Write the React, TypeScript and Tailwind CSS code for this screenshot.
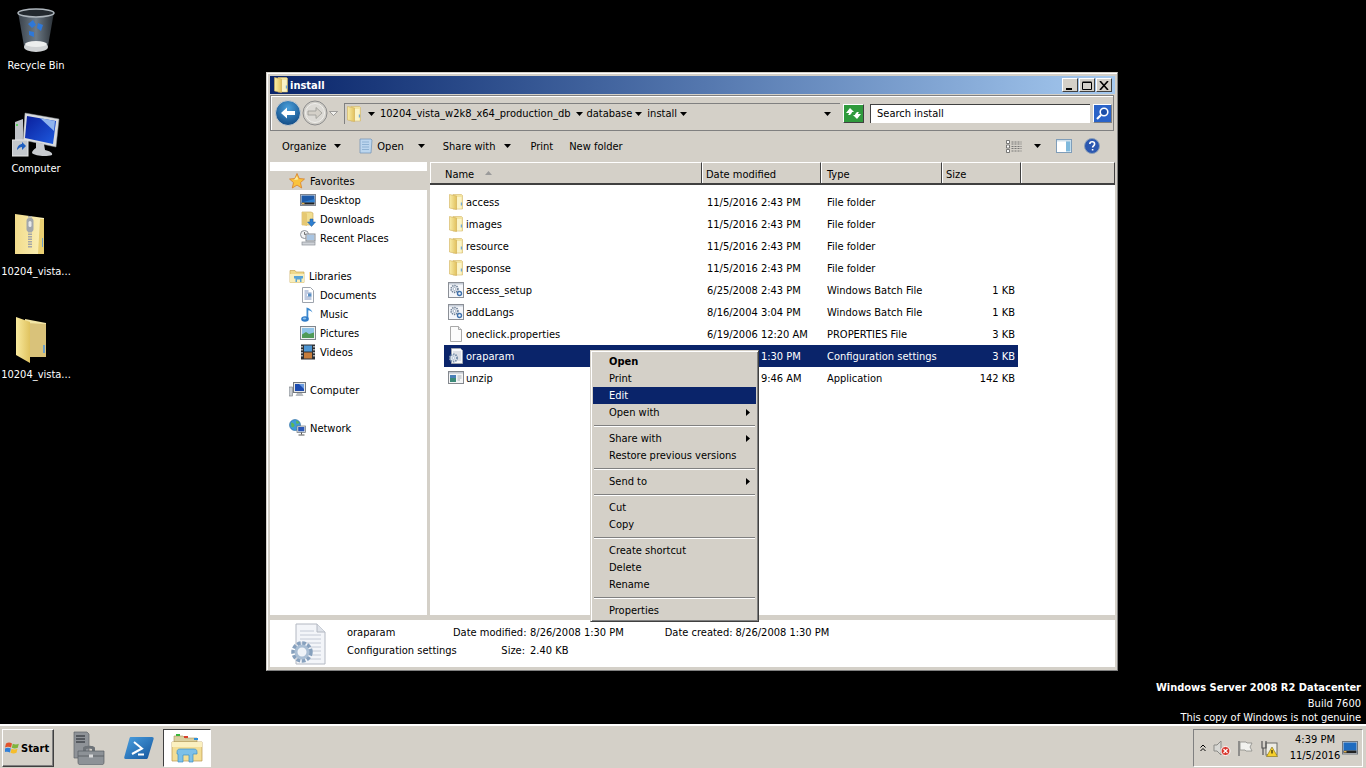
import React from 'react';

const font = "font-['DejaVu_Sans_Condensed','DejaVu_Sans',sans-serif] [font-stretch:condensed]";

const Caret = ({ className = '' }: { className?: string }) => (
  <svg width="7" height="4" viewBox="0 0 7 4" className={className}>
    <path d="M0 0h7L3.5 4z" fill="#000" />
  </svg>
);

const FolderSmall = () => (
  <svg width="16" height="16" viewBox="0 0 16 16" className="shrink-0">
    <defs>
      <linearGradient id="fs" x1="0" y1="0" x2="1" y2="0">
        <stop offset="0" stopColor="#f9eda8" />
        <stop offset="1" stopColor="#e2c25f" />
      </linearGradient>
    </defs>
    <path d="M5 .5h8.500l1 1V15H5z" fill="#f3e4a0" stroke="#d4b766" strokeWidth=".6" />
    <path d="M1.500.5 8.500 2v13.500l-7-1.500z" fill="url(#fs)" stroke="#d2b05a" strokeWidth=".6" />
    <path d="M9 3h4.500v11.500H9z" fill="#fbf4c8" />
    <rect x="12.800" y="8.500" width="1.300" height="3" fill="#6fa8d8" />
  </svg>
);

const BatchIcon = () => (
  <svg width="16" height="16" viewBox="0 0 16 16" className="shrink-0">
    <rect x=".5" y=".5" width="15" height="15" fill="#f4f6fa" stroke="#8b8f96" />
    <rect x="1" y="1" width="14" height="1.500" fill="#c4cbd6" />
    <circle cx="6.500" cy="7" r="3.400" fill="none" stroke="#6d7f96" strokeWidth="1.600" strokeDasharray="1.400 .8" />
    <circle cx="6.500" cy="7" r="1.500" fill="#fff" stroke="#7f93ad" strokeWidth=".7" />
    <circle cx="11.500" cy="11.500" r="2" fill="none" stroke="#3f72ad" strokeWidth="1.400" />
  </svg>
);

const BlankDoc = () => (
  <svg width="16" height="16" viewBox="0 0 16 16" className="shrink-0">
    <path d="M2.500.5h8l3 3v12h-11z" fill="#fbfbfb" stroke="#a8a8a8" />
    <path d="M10.500.5v3h3" fill="#e8e8e8" stroke="#a8a8a8" />
  </svg>
);

const ConfigIcon = () => (
  <svg width="16" height="16" viewBox="0 0 16 16" className="shrink-0">
    <path d="M3.500.5h9l2 2v13h-11z" fill="#f8f9fb" stroke="#a0a6b0" />
    <path d="M5 4h8M5 6h8M8 8h5M9 10h4M9 12h4" stroke="#b5bcc8" strokeWidth=".8" />
    <circle cx="5.500" cy="10" r="3.600" fill="#eef2f7" stroke="#7d93ad" strokeWidth="2" strokeDasharray="1.500 .8" />
    <circle cx="5.500" cy="10" r="1.500" fill="#eef2f7" stroke="#8ea4bd" strokeWidth=".6" />
  </svg>
);

const AppIcon = () => (
  <svg width="16" height="16" viewBox="0 0 16 16" className="shrink-0">
    <rect x=".5" y="1.500" width="15" height="12" fill="#f4f5f6" stroke="#84888e" />
    <rect x="1" y="2" width="14" height="1.600" fill="#c3c8d0" />
    <rect x="2" y="5" width="6" height="7" fill="#3c8a78" />
    <rect x="2" y="5" width="6" height="3" fill="#4a7fb8" />
    <path d="M9.500 6h4M9.500 8h4M9.500 10h2.500" stroke="#9aa0a8" strokeWidth=".8" />
  </svg>
);

const Star = () => (
  <svg width="16" height="16" viewBox="0 0 16 16" className="shrink-0">
    <path d="M8 .5l2.200 5 5.300.5-4 3.600 1.200 5.400L8 12.100 3.300 15l1.200-5.400-4-3.600 5.300-.5z" fill="#f9c33c" stroke="#d9802a" strokeWidth=".8" />
    <path d="M8 3l1.300 3.500L5 7z" fill="#fdeaa0" />
  </svg>
);

const DesktopIcon = () => (
  <svg width="16" height="16" viewBox="0 0 16 16" className="shrink-0">
    <rect x=".5" y="2.500" width="15" height="11" fill="#d9dde2" stroke="#7e8590" />
    <rect x="1.500" y="3.500" width="13" height="7" fill="#1e5aa8" />
    <path d="M1.500 10.500 14.500 7v3.500z" fill="#2d7fd0" />
    <rect x="1.500" y="10.500" width="13" height="2" fill="#222" />
    <rect x="2" y="10.800" width="2.500" height="1.400" fill="#e0b050" />
  </svg>
);

const DownloadsIcon = () => (
  <svg width="16" height="16" viewBox="0 0 16 16" className="shrink-0">
    <path d="M2 1h9l2 1v12H2z" fill="#f0dd90" stroke="#c9a650" strokeWidth=".6" />
    <path d="M2 1l5 1.500V15l-5-1.500z" fill="#e6c873" />
    <path d="M10 8h3v3h2.500l-4 4.500-4-4.500H10z" fill="#2f7fd0" stroke="#1b5aa0" strokeWidth=".5" />
  </svg>
);

const RecentIcon = () => (
  <svg width="16" height="16" viewBox="0 0 16 16" className="shrink-0">
    <circle cx="4.500" cy="4.500" r="4" fill="#f1f2f4" stroke="#8d929a" />
    <path d="M4.500 2v2.500H7" fill="none" stroke="#555" strokeWidth=".8" />
    <rect x="6" y="4" width="9" height="7" fill="#dfe3e8" stroke="#858b93" />
    <rect x="7" y="5" width="7" height="5" fill="#a9c5e2" />
    <rect x="2" y="12" width="13" height="3" fill="#cfd3d8" stroke="#8b9097" strokeWidth=".7" />
  </svg>
);

const LibrariesIcon = () => (
  <svg width="16" height="16" viewBox="0 0 16 16" className="shrink-0">
    <path d="M1 2.500h5l1 1.500h8v10.500H1z" fill="#efd98c" stroke="#c9a650" strokeWidth=".7" />
    <path d="M1 6h14v8.500H1z" fill="#f8eebc" />
    <path d="M5 8h9v2.500H12.500V14H11v-2.500H8V14H6.500v-3.500H5z" fill="#58a3d6" />
  </svg>
);

const DocumentsIcon = () => (
  <svg width="16" height="16" viewBox="0 0 16 16" className="shrink-0">
    <path d="M2.500.5h8l3 3v12h-11z" fill="#fff" stroke="#9ea4ad" />
    <path d="M4.500 4h4M4.500 6h7M4.500 8h2.500M4.500 10h7M4.500 12h7" stroke="#6f89b8" strokeWidth=".9" />
    <rect x="8" y="6.500" width="3.500" height="3" fill="#5a8fc4" />
  </svg>
);

const MusicIcon = () => (
  <svg width="16" height="16" viewBox="0 0 16 16" className="shrink-0">
    <path d="M6.500 12V1.500c2 .5 5 2 6 5-1.500-1.500-3-2-4.200-2.200V13z" fill="#3c8ad0" />
    <ellipse cx="5" cy="13" rx="3.800" ry="2.700" fill="#2f7bc8" />
    <ellipse cx="4.500" cy="12.400" rx="1.800" ry="1" fill="#8cc3ef" />
  </svg>
);

const PicturesIcon = () => (
  <svg width="16" height="16" viewBox="0 0 16 16" className="shrink-0">
    <rect x=".5" y="1.500" width="15" height="13" fill="#eef0f2" stroke="#80868e" />
    <rect x="2" y="3" width="12" height="10" fill="#8fc3e8" />
    <path d="M2 9.500 6 7l3 2 5-1.500V13H2z" fill="#4f9a58" />
  </svg>
);

const VideosIcon = () => (
  <svg width="16" height="16" viewBox="0 0 16 16" className="shrink-0">
    <rect x="1" y=".5" width="14" height="15" fill="#2d3136" />
    <path d="M2 2v1.500M2 5v1.500M2 8v1.500M2 11v1.500M14 2v1.500M14 5v1.500M14 8v1.500M14 11v1.500" stroke="#fff" strokeWidth="1.200" />
    <rect x="4" y="1.500" width="8" height="6" fill="#4f97d4" />
    <rect x="4" y="8.500" width="8" height="6" fill="#c77d3c" />
  </svg>
);

const ComputerSmall = () => (
  <svg width="17" height="16" viewBox="0 0 17 16" className="shrink-0">
    <rect x="0" y="5" width="3.500" height="9" fill="#c8ccd0" stroke="#70767c" strokeWidth=".6" />
    <rect x="4.500" y=".5" width="12" height="10" fill="#e4e6e8" stroke="#73787e" />
    <rect x="6" y="2" width="9" height="7" fill="#1c4bb0" />
    <path d="M10 2h5v5z" fill="#6a9be0" />
    <path d="M8 11h5l1.500 3h-8z" fill="#b8bcc0" />
  </svg>
);

const NetworkIcon = () => (
  <svg width="17" height="17" viewBox="0 0 17 17" className="shrink-0">
    <circle cx="6" cy="6" r="5.500" fill="#3f9bd8" stroke="#23679f" strokeWidth=".6" />
    <path d="M2 3.500c2 0 3 1 3.500 2.500S4 8.500 2.500 8M7 1.500c1.500 1 3 1 3.500 2.500L7.500 5z" fill="#5db854" />
    <rect x="8" y="7" width="8.500" height="6.500" fill="#dfe3e6" stroke="#6c7278" strokeWidth=".7" />
    <rect x="9.200" y="8" width="6.100" height="4.300" fill="#2a57b8" />
    <path d="M12.500 13.500v2M9.500 16h6" stroke="#555" />
  </svg>
);

const navSections = [
  {
    head: 'Favorites',
    icon: <Star />,
    active: true,
    items: [
      { label: 'Desktop', icon: <DesktopIcon /> },
      { label: 'Downloads', icon: <DownloadsIcon /> },
      { label: 'Recent Places', icon: <RecentIcon /> },
    ],
  },
  {
    head: 'Libraries',
    icon: <LibrariesIcon />,
    items: [
      { label: 'Documents', icon: <DocumentsIcon /> },
      { label: 'Music', icon: <MusicIcon /> },
      { label: 'Pictures', icon: <PicturesIcon /> },
      { label: 'Videos', icon: <VideosIcon /> },
    ],
  },
  { head: 'Computer', icon: <ComputerSmall />, items: [] },
  { head: 'Network', icon: <NetworkIcon />, items: [] },
];

const files = [
  { name: 'access', date: '11/5/2016 2:43 PM', type: 'File folder', size: '', icon: <FolderSmall /> },
  { name: 'images', date: '11/5/2016 2:43 PM', type: 'File folder', size: '', icon: <FolderSmall /> },
  { name: 'resource', date: '11/5/2016 2:43 PM', type: 'File folder', size: '', icon: <FolderSmall /> },
  { name: 'response', date: '11/5/2016 2:43 PM', type: 'File folder', size: '', icon: <FolderSmall /> },
  { name: 'access_setup', date: '6/25/2008 2:43 PM', type: 'Windows Batch File', size: '1 KB', icon: <BatchIcon /> },
  { name: 'addLangs', date: '8/16/2004 3:04 PM', type: 'Windows Batch File', size: '1 KB', icon: <BatchIcon /> },
  { name: 'oneclick.properties', date: '6/19/2006 12:20 AM', type: 'PROPERTIES File', size: '3 KB', icon: <BlankDoc /> },
  { name: 'oraparam', date: '8/26/2008 1:30 PM', type: 'Configuration settings', size: '3 KB', icon: <ConfigIcon />, selected: true },
  { name: 'unzip', date: '8/26/2008 9:46 AM', type: 'Application', size: '142 KB', icon: <AppIcon /> },
];

const menuGroups = [
  [{ label: 'Open', bold: true }, { label: 'Print' }, { label: 'Edit', active: true }, { label: 'Open with', arrow: true }],
  [{ label: 'Share with', arrow: true }, { label: 'Restore previous versions' }],
  [{ label: 'Send to', arrow: true }],
  [{ label: 'Cut' }, { label: 'Copy' }],
  [{ label: 'Create shortcut' }, { label: 'Delete' }, { label: 'Rename' }],
  [{ label: 'Properties' }],
];

const columns = [
  { label: 'Name', w: 'w-[272px]', pl: 'pl-[14px]', sort: true },
  { label: 'Date modified', w: 'w-[119px]', pl: 'pl-[3px]' },
  { label: 'Type', w: 'w-[121px]', pl: 'pl-[5px]' },
  { label: 'Size', w: 'w-[79px]', pl: 'pl-[3px]' },
  { label: '', w: 'flex-1', pl: '' },
];

const RecycleBin = () => (
  <svg width="40" height="46" viewBox="0 0 40 46">
    <defs>
      <linearGradient id="bin" x1="0" y1="0" x2="1" y2="0">
        <stop offset="0" stopColor="#39414a" />
        <stop offset=".5" stopColor="#6d7a86" />
        <stop offset="1" stopColor="#2a3036" />
      </linearGradient>
    </defs>
    <path d="M2 5l6 34c2 5 22 5 24 0l6-34z" fill="url(#bin)" />
    <ellipse cx="20" cy="40" rx="12" ry="5" fill="#cfd2d4" />
    <ellipse cx="20" cy="37" rx="11" ry="3" fill="#eceeee" />
    <ellipse cx="20" cy="6" rx="18" ry="4" fill="#23292f" stroke="#aeb6bd" strokeWidth="1.500" />
    <path d="M12 17l5-4 3 5-4 3zM22 16l5 2-2 6-4-3zM13 24l5 1 0 5-5-2z" fill="#2f78d8" />
  </svg>
);

const ComputerBig = () => (
  <svg width="48" height="48" viewBox="0 0 48 48">
    <defs>
      <linearGradient id="scr" x1="0" y1="0" x2="1" y2="1">
        <stop offset="0" stopColor="#0a1f9c" />
        <stop offset="1" stopColor="#1e5be0" />
      </linearGradient>
    </defs>
    <path d="M3 10l8-3v30H3z" fill="#bfc3c8" />
    <rect x="4" y="12" width="2" height="2" fill="#5fd060" />
    <path d="M13 1l34 6-3 28-33-7z" fill="#d9dcdf" stroke="#8c9095" strokeWidth=".5" />
    <path d="M15 4l29 5-3 23-28-6z" fill="url(#scr)" />
    <path d="M28 6l15 3-1 10z" fill="#8fb4ee" />
    <path d="M24 30l8 2 1 6c5 1 8 3 7 5-6 2-17 1-20-2 0-2 2-4 4-5z" fill="#c8cbcf" />
    <rect x="0" y="28" width="16" height="16" fill="#c3c7cc" stroke="#e8e8e8" />
    <path d="M5 38c0-4 3-6 5-6v-2l4 4-4 4v-3c-2 0-3 1-5 3z" fill="#1f5fc0" />
  </svg>
);

const ZipFolder = () => (
  <svg width="32" height="42" viewBox="0 0 32 42">
    <defs>
      <linearGradient id="zf" x1="0" y1="0" x2="1" y2="0">
        <stop offset="0" stopColor="#f2dc8c" />
        <stop offset="1" stopColor="#fbf0b8" />
      </linearGradient>
    </defs>
    <path d="M1 1l29 4v36H1z" fill="url(#zf)" />
    <path d="M26 6h4v35h-6z" fill="#e9cf72" />
    <path d="M28 25v9h1v-9z" fill="#6fa0c8" />
    <path d="M16 3v32" stroke="#a4a6a8" strokeWidth="4" strokeDasharray="1.500 1" />
    <rect x="12.500" y="5" width="7" height="14" rx="3" fill="#a2a7ac" />
    <rect x="14.500" y="8" width="3" height="6" rx="1.500" fill="#e7e9ea" />
  </svg>
);

const FolderBig = () => (
  <svg width="32" height="46" viewBox="0 0 32 46">
    <defs>
      <linearGradient id="fb" x1="0" y1="0" x2="1" y2="0">
        <stop offset="0" stopColor="#f9ea9f" />
        <stop offset="1" stopColor="#e0c360" />
      </linearGradient>
    </defs>
    <path d="M10 2l21 4v34H10z" fill="#f3e6a6" />
    <path d="M10 6l21 1v33H12z" fill="#d9c27a" />
    <path d="M1 0l14 5v41L1 38z" fill="url(#fb)" />
    <path d="M28 28v8h2v-8z" fill="#6fa0c8" />
  </svg>
);

const desktopItems = [
  { label: 'Recycle Bin', icon: <RecycleBin />, h: 'h-[73px]', mb: 'mb-[4px]' },
  { label: 'Computer', icon: <ComputerBig />, h: 'h-[103px]', mb: 'mb-[0px]' },
  { label: '10204_vista...', icon: <ZipFolder />, h: 'h-[103px]', mb: 'mb-[8px] mr-[13px]' },
  { label: '10204_vista...', icon: <FolderBig />, h: 'h-[103px]', mb: 'mb-[3px] mr-[10px]' },
];

const StartFlag = () => (
  <svg width="15" height="14" viewBox="0 0 15 14" className="shrink-0">
    <path d="M1 2.500c2-1.200 4-1.200 6 0L6 6.500C4 5.500 2 5.500 0 6.500z" fill="#e0532c" />
    <path d="M7.800 2.800c2 1 4 1 6 0l-1 4c-2 1-4 1-6 0z" fill="#7fb53c" />
    <path d="M0 7.500c2-1 4-1 5.800 0L5 11.500c-2-1-4-1-6 0z" fill="#2f7fd8" />
    <path d="M6.500 7.800c2 1 4 1 6 0l-1 4c-2 1-4 1-6 0z" fill="#f5bd2c" />
  </svg>
);

const ServerManager = () => (
  <svg width="32" height="34" viewBox="0 0 32 34">
    <path d="M1 1h13l2 2v24H1z" fill="#8f9398" stroke="#5f6468" strokeWidth=".7" />
    <path d="M3 5h9M3 8h9M3 11h9" stroke="#43474c" strokeWidth="1.500" />
    <path d="M10 17c0-3 12-3 12 0v3h-3v-2c-2-.7-4-.7-6 0v2h-3z" fill="#6e7378" />
    <path d="M5 20h26v11c0 2-1 3-3 3H8c-2 0-3-1-3-3z" fill="#8d9297" stroke="#585c61" strokeWidth=".7" />
    <path d="M5 25h26" stroke="#5e6267" />
    <rect x="16" y="23.500" width="4" height="3" fill="#d9dadb" />
  </svg>
);

const PowerShell = () => (
  <svg width="30" height="24" viewBox="0 0 30 24">
    <defs>
      <linearGradient id="ps" x1="0" y1="0" x2="1" y2="1">
        <stop offset="0" stopColor="#4ba0e0" />
        <stop offset="1" stopColor="#13549c" />
      </linearGradient>
    </defs>
    <path d="M7 1h21c1.200 0 2 .8 1.600 2L24 21.500c-.4 1-1 1.500-2 1.500H1.500C.5 23 0 22 .3 21L5.500 2.300C5.700 1.500 6.200 1 7 1z" fill="url(#ps)" />
    <path d="M10 6l8 6.500L8 18" fill="none" stroke="#fff" strokeWidth="2" />
    <path d="M14 18.500h6" stroke="#fff" strokeWidth="2" />
  </svg>
);

const Explorer = () => (
  <svg width="32" height="30" viewBox="0 0 32 30">
    <path d="M3 3h9l2 2h12v4H3z" fill="#d9cfa0" stroke="#a8935a" strokeWidth=".6" />
    <rect x="5" y="1" width="4" height="2" fill="#3ab53c" />
    <rect x="13" y="3" width="4" height="2" fill="#d8402c" />
    <rect x="23" y="5" width="4" height="2" fill="#2f8fd8" />
    <path d="M1 9h30v19H1z" fill="#f3de96" stroke="#b9974c" strokeWidth=".7" />
    <path d="M1 9h30v5H1z" fill="#fbf0c0" />
    <path d="M6 19c0-2 1-3 3-3h14c2 0 3 1 3 3v2h-4v8h-4v-7h-6v7H7v-8H6z" fill="#7cc0e8" stroke="#3d8fc4" strokeWidth=".7" />
  </svg>
);

const TrayDesktop = () => (
  <svg width="16" height="14" viewBox="0 0 16 14" className="shrink-0">
    <rect x=".5" y=".5" width="15" height="12.500" fill="#cfd3d8" stroke="#6f767e" />
    <rect x="1.500" y="1.500" width="13" height="8" fill="#1f6cc0" />
    <rect x="1.500" y="9.500" width="13" height="2.500" fill="#222" />
    <rect x="2" y="10" width="2.500" height="1.500" fill="#e0b050" />
  </svg>
);

const NavPane = () => (
  <div className="w-[157px] shrink-0 bg-white pt-[9px]">
    {navSections.map((sec, i) => (
      <div key={i} className="mb-[19px]">
        <div className={`flex h-[19px] items-center gap-[4px] pl-[19px] ${sec.active ? 'bg-[#d4d0c8]' : ''}`}>
          {sec.icon}
          <span className={sec.active ? 'ml-[1px] mt-[2px]' : 'mt-[2px]'}>{sec.head}</span>
        </div>
        {sec.items.map((it, j) => (
          <div key={j} className="flex h-[19px] items-center gap-[4px] pl-[30px]">
            {it.icon}
            <span className="mt-[2px]">{it.label}</span>
          </div>
        ))}
      </div>
    ))}
  </div>
);

const FileList = () => (
  <div className="flex min-w-0 flex-1 flex-col">
    <div className="flex h-[23px] shrink-0 border-b-2 border-[#404040]">
      {columns.map((c, i) => (
        <div
          key={i}
          className={`flex items-center border-t border-l border-r border-t-white border-l-white border-r-[#404040] pt-[2px] ${c.w} ${c.pl}`}
        >
          <span>{c.label}</span>
          {c.sort && (
            <svg width="7" height="4" viewBox="0 0 7 4" className="ml-[11px] mb-[3px]">
              <path d="M0 4h7L3.500 0z" fill="#9a9a9a" />
            </svg>
          )}
        </div>
      ))}
    </div>
    <div className="flex-1 bg-white pt-[6px] pl-[14px]">
      {files.map((f, i) => (
        <div
          key={i}
          className={`flex h-[22px] w-[574px] items-center pl-[4px] ${f.selected ? 'bg-[#0a246a] text-white' : ''}`}
        >
          <div className="flex w-[259px] items-center gap-[2px]">
            {f.icon}
            <span>{f.name}</span>
          </div>
          <span className="w-[120px]">{f.date}</span>
          <span className="w-[128px]">{f.type}</span>
          <span className="w-[60px] text-right">{f.size}</span>
        </div>
      ))}
    </div>
  </div>
);

const ContextMenu = () => (
  <div className="absolute left-[590px] top-[350px] w-[169px] border border-t-[#d4d0c8] border-l-[#d4d0c8] border-r-[#404040] border-b-[#404040] bg-[#d4d0c8] p-[2px] shadow-[inset_1px_1px_0_#fff,inset_-1px_-1px_0_#808080]">
    {menuGroups.map((g, i) => (
      <div key={i}>
        {i > 0 && (
          <div className="flex h-[9px] items-center px-[1px]">
            <div className="h-[2px] w-full border-t border-b border-t-[#808080] border-b-white" />
          </div>
        )}
        {g.map((it: { label: string; bold?: boolean; active?: boolean; arrow?: boolean }, j) => (
          <div
            key={j}
            className={`flex h-[17px] items-center justify-between pl-[16px] pr-[6px] ${it.active ? 'bg-[#0a246a] text-white' : ''} ${it.bold ? 'font-bold' : ''}`}
          >
            <span>{it.label}</span>
            {it.arrow && (
              <svg width="4" height="7" viewBox="0 0 4 7">
                <path d="M0 0l4 3.500L0 7z" fill="#000" />
              </svg>
            )}
          </div>
        ))}
      </div>
    ))}
  </div>
);

const Window = () => (
  <div className="absolute left-[266px] top-[72px] flex h-[599px] w-[852px] flex-col border border-t-[#d4d0c8] border-l-[#d4d0c8] border-r-[#808080] border-b-[#808080] bg-[#d4d0c8] pb-[2px] pl-[3px] pr-[2px] pt-[3px] shadow-[inset_1px_1px_0_#fff]">
    {/* Title bar */}
    <div className="flex h-[18px] shrink-0 items-center bg-gradient-to-r from-[#0a246a] to-[#a6caf0] pl-[3px] pr-[3px]">
      <FolderSmall />
      <span className="ml-[1px] flex-1 font-bold text-white">install</span>
      {['min', 'max', 'close'].map(b => (
        <div
          key={b}
          className="ml-[1px] flex h-[14px] w-[16px] items-center justify-center border border-t-white border-l-white border-r-[#404040] border-b-[#404040] bg-[#d4d0c8]"
        >
          <svg width="10" height="9" viewBox="0 0 10 9">
            {b === 'min' && <rect x="1" y="7" width="6" height="2" fill="#000" />}
            {b === 'max' && <path d="M.5 1.500h9v7h-9z M.5 1h9" fill="none" stroke="#000" />}
            {b === 'close' && <path d="M1 0l8 9M9 0L1 9" stroke="#000" strokeWidth="1.600" />}
          </svg>
        </div>
      ))}
    </div>

    {/* Address band */}
    <div className="mt-[1px] mr-[1px] flex h-[36px] shrink-0 items-center border border-[#808080] pl-[4px] shadow-[inset_1px_1px_0_#fff]">
      <svg width="26" height="26" viewBox="0 0 26 26" className="shrink-0">
        <defs>
          <radialGradient id="back" cx=".5" cy=".3" r=".8">
            <stop offset="0" stopColor="#4aa0dc" />
            <stop offset="1" stopColor="#0a3f78" />
          </radialGradient>
        </defs>
        <circle cx="13" cy="13" r="12.500" fill="url(#back)" stroke="#c8ccd0" />
        <path d="M6 13l6-5.500V11h8v4h-8v3.500z" fill="#fff" />
      </svg>
      <svg width="26" height="26" viewBox="0 0 26 26" className="ml-[1px] shrink-0">
        <circle cx="13" cy="13" r="12" fill="#d0cec8" stroke="#8c8c8c" />
        <circle cx="13" cy="13" r="9.500" fill="#dcdad5" stroke="#f0efec" />
        <path d="M20 13l-6-5.500V11H6v4h8v3.500z" fill="#d4d0c8" stroke="#9a9a96" strokeWidth=".8" />
      </svg>
      <svg width="9" height="5" viewBox="0 0 9 5" className="ml-[1px] shrink-0">
        <path d="M.5.5h8L4.500 4.500z" fill="#f2f1ee" stroke="#808080" strokeWidth=".7" />
      </svg>
      <div className="ml-[6px] flex h-[21px] w-[496px] shrink-0 items-center border-t border-l border-t-[#808080] border-l-[#808080] pl-[1px] shadow-[inset_1px_1px_0_#d4d0c8]">
        <FolderSmall />
        <Caret className="ml-[6px]" />
        <span className="ml-[5px]">10204_vista_w2k8_x64_production_db</span>
        <Caret className="ml-[6px]" />
        <span className="ml-[3px]">database</span>
        <Caret className="ml-[3px]" />
        <span className="ml-[5px]">install</span>
        <Caret className="ml-[3px]" />
        <Caret className="ml-auto mr-[9px]" />
      </div>
      <div className="ml-[3px] flex h-[19px] w-[21px] shrink-0 items-center justify-center border border-t-white border-l-white border-r-[#404040] border-b-[#404040] bg-[#2f9a3c]">
        <svg width="17" height="13" viewBox="0 0 17 13">
          <path d="M1 6l4-5 4 4H7c0 1-1 2-2 3H3c1-1 1-2 1-2zM16 7l-4 5-4-4h2c0-1 1-2 2-3h2c-1 1-1 2-1 2z" fill="#fff" />
        </svg>
      </div>
      <div className="ml-[6px] flex h-[19px] w-[220px] shrink-0 items-center bg-white pl-[7px] shadow-[inset_1px_1px_0_#404040]">
        Search install
      </div>
      <div className="ml-[3px] flex h-[19px] w-[19px] shrink-0 items-center justify-center border border-t-white border-l-white border-r-[#808080] border-b-[#808080] bg-[#2a63c8]">
        <svg width="15" height="15" viewBox="0 0 15 15">
          <circle cx="9" cy="6" r="3.800" fill="#1b4ea8" stroke="#fff" strokeWidth="1.600" />
          <path d="M6 9l-4 4" stroke="#fff" strokeWidth="2.200" />
        </svg>
      </div>
    </div>

    {/* Command bar */}
    <div className="flex h-[31px] shrink-0 items-center pb-[1px] pl-[12px]">
      <span>Organize</span>
      <Caret className="ml-[8px]" />
      <svg width="16" height="16" viewBox="0 0 16 16" className="ml-[17px] shrink-0">
        <path d="M2 1h11l1 1-1 13H2z" fill="#bcd6ee" stroke="#6e91b4" strokeWidth=".7" />
        <path d="M4 4h7M4 6.500h7M4 9h7M4 11.500h7" stroke="#7ba3c8" strokeWidth=".7" />
      </svg>
      <span className="ml-[3px]">Open</span>
      <Caret className="ml-[14px]" />
      <span className="ml-[18px]">Share with</span>
      <Caret className="ml-[9px]" />
      <span className="ml-[19px]">Print</span>
      <span className="ml-[16px]">New folder</span>
      <svg width="16" height="13" viewBox="0 0 16 13" className="ml-auto shrink-0">
        <path d="M.5.5h3v3h-3zM.5 5h3v3h-3zM.5 9.500h3v3h-3z" fill="#fff" stroke="#5a5a5a" strokeWidth=".8" />
        <path d="M5.500 2h10M5.500 4h10M5.500 6.500h10M5.500 8.500h10M5.500 11h10" stroke="#5f5f5f" strokeWidth=".8" strokeDasharray="2 1" />
      </svg>
      <Caret className="ml-[12px]" />
      <svg width="16" height="14" viewBox="0 0 16 14" className="ml-[15px] shrink-0">
        <rect x=".5" y=".5" width="15" height="13" fill="#fff" stroke="#7f9db9" />
        <rect x="10" y="2" width="4.500" height="10.500" fill="#7fb9dc" />
        <rect x="1" y="1" width="14" height="1.500" fill="#cfe0ec" />
      </svg>
      <svg width="16" height="16" viewBox="0 0 16 16" className="ml-[12px] mr-[15px] shrink-0">
        <circle cx="8" cy="8" r="7.500" fill="#2c58b0" stroke="#8da0b8" />
        <path d="M5.800 6c0-3 4.800-3 4.800 0 0 1.800-2 1.800-2 3.500M8.600 11v1.600" fill="none" stroke="#fff" strokeWidth="1.600" />
      </svg>
    </div>

    {/* Main */}
    <div className="flex h-[453px] shrink-0">
      <NavPane />
      <div className="w-[3px] shrink-0 bg-[#d4d0c8]" />
      <FileList />
    </div>

    {/* Details pane */}
    <div className="mt-[5px] flex h-[47px] shrink-0 whitespace-nowrap bg-white pt-[4px]">
      <svg width="40" height="42" viewBox="0 0 40 42" className="ml-[18px] -mt-[1px] shrink-0">
        <path d="M8 1h21l8 8v32H8z" fill="#f3f5f9" stroke="#b3b8c2" />
        <path d="M29 1v8h8" fill="#dfe3ea" stroke="#b3b8c2" />
        <path d="M12 8h14M12 12h21M12 16h21M12 20h21M22 24h11M24 28h9M24 32h9M22 36h11" stroke="#c4cad6" />
        <circle cx="14" cy="29" r="8.500" fill="none" stroke="#86a0bd" strokeWidth="4.500" strokeDasharray="3.500 1.500" />
        <circle cx="14" cy="29" r="6" fill="none" stroke="#a9bed4" strokeWidth="3" />
        <circle cx="14" cy="29" r="3.500" fill="#eef3f8" />
      </svg>
      <div className="ml-[19px] flex w-[106px] flex-col gap-[1px]">
        <span className="h-[17px] leading-[17px]">oraparam</span>
        <span className="h-[17px] leading-[17px]">Configuration settings</span>
      </div>
      <div className="flex flex-col gap-[1px]">
        <div className="flex h-[17px] leading-[17px]"><span className="w-[72px] text-right">Date modified:</span><span className="ml-[5px]">8/26/2008 1:30 PM</span></div>
        <div className="flex h-[17px] leading-[17px]"><span className="w-[72px] text-right">Size:</span><span className="ml-[5px]">2.40 KB</span></div>
      </div>
      <div className="ml-[41px] flex h-[17px] leading-[17px]">
        <span>Date created:</span><span className="ml-[3px]">8/26/2008 1:30 PM</span>
      </div>
    </div>
  </div>
);

const Taskbar = () => (
  <div className="flex h-[44px] shrink-0 items-center border-t-2 border-t-white bg-[#d4d0c8] pl-[2px] pr-[3px] pt-[2px]">
    <div className="flex h-[38px] w-[52px] items-center border border-t-white border-l-white border-r-[#404040] border-b-[#404040] pl-[2px] shadow-[inset_-1px_-1px_0_#808080]">
      <StartFlag />
      <span className="ml-[1px] font-bold">Start</span>
    </div>
    <div className="ml-[19px]"><ServerManager /></div>
    <div className="ml-[19px]"><PowerShell /></div>
    <div className="ml-[9px] flex h-[38px] w-[48px] items-center justify-center border border-t-[#404040] border-l-[#404040] border-r-white border-b-white bg-white">
      <Explorer />
    </div>
    <div className="ml-auto flex h-[38px] w-[170px] items-center border border-t-[#808080] border-l-[#808080] border-r-white border-b-white pl-[6px]">
      <svg width="6" height="8" viewBox="0 0 6 8" className="shrink-0">
        <path d="M.5 3.500 3 1l2.500 2.500M.5 7 3 4.500 5.500 7" fill="none" stroke="#000" />
      </svg>
      <svg width="18" height="16" viewBox="0 0 18 16" className="ml-[7px] shrink-0">
        <path d="M1 5h3l4-4v14l-4-4H1z" fill="#d8d8d4" stroke="#8b8b87" />
        <circle cx="12.500" cy="11" r="4.500" fill="#d8362c" stroke="#fff" />
        <path d="M10.500 9l4 4M14.500 9l-4 4" stroke="#fff" strokeWidth="1.200" />
      </svg>
      <svg width="16" height="16" viewBox="0 0 16 16" className="ml-[6px] shrink-0">
        <path d="M2 1v15" stroke="#777" strokeWidth="1.500" />
        <path d="M3 2h6l1 1h5l-2 4 2 4H9l-1-1H3z" fill="#f2f2ef" stroke="#8a8a86" strokeWidth=".8" />
      </svg>
      <svg width="17" height="17" viewBox="0 0 17 17" className="ml-[8px] shrink-0">
        <rect x="5" y="3" width="11" height="12" fill="#ecebe4" stroke="#6a6a66" />
        <path d="M1 1v7h4V1M2 8v7" fill="none" stroke="#555" strokeWidth="1.200" />
        <path d="M11 7l5.500 9.500h-11z" fill="#f6cf2c" stroke="#7a6a10" strokeWidth=".6" />
        <path d="M11 10v3.500" stroke="#000" />
      </svg>
      <div className="ml-[12px] flex w-[50px] flex-col items-center leading-[16px]">
        <span>4:39 PM</span>
        <span>11/5/2016</span>
      </div>
      <div className="ml-[2px]"><TrayDesktop /></div>
    </div>
  </div>
);

const App: React.FC = () => {
  return (
    <div className={`relative flex h-screen w-screen flex-col overflow-hidden bg-black text-[11px] leading-none text-black ${font}`}>
      <div className="relative flex-1">
        {/* Desktop icons */}
        <div className="flex w-[72px] flex-col text-white">
          {desktopItems.map((d, i) => (
            <div key={i} className={`flex flex-col items-center justify-end ${d.h}`}>
              <div className={d.mb}>{d.icon}</div>
              <span className="h-[16px] whitespace-nowrap pt-[1px] leading-[16px]">{d.label}</span>
            </div>
          ))}
        </div>

        <Window />
        <ContextMenu />

        {/* Watermark */}
        <div className="absolute bottom-[-1px] right-[5px] flex flex-col items-end text-white">
          <span className="h-[17px] font-bold leading-[17px]">Windows Server 2008 R2 Datacenter</span>
          <span className="h-[15px] leading-[15px]">Build 7600</span>
          <span className="h-[14px] leading-[14px]">This copy of Windows is not genuine</span>
        </div>
      </div>
      <Taskbar />
    </div>
  );
};

export default App;
